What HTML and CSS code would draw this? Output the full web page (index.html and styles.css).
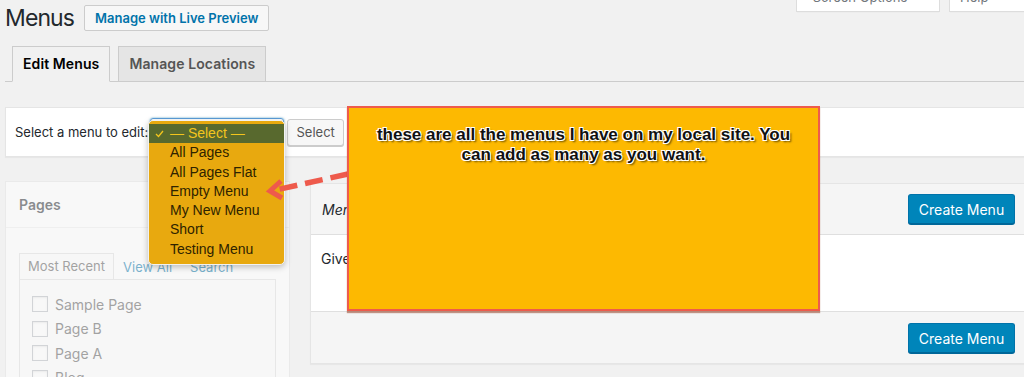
FILE: index.html
```html
<!DOCTYPE html>
<html lang="en">
<head>
    <meta charset="UTF-8">
    <title>Menus</title>
    <link rel="stylesheet" href="styles.css">
</head>
<body>
    <div class="wrap">
        <div class="page-head">
            <h1>Menus</h1>
            <a class="title-action" href="#">Manage with Live Preview</a>
            <div class="screen-links">
                <button class="meta-btn options">Screen Options <span class="caret"></span></button>
                <button class="meta-btn help">Help <span class="caret"></span></button>
            </div>
        </div>

        <div class="nav-tabs">
            <a class="nav-tab active" href="#">Edit Menus</a>
            <a class="nav-tab" href="#">Manage Locations</a>
        </div>

        <div class="manage-menus">
            <label>Select a menu to edit:</label>
            <div class="menu-select"></div>
            <button class="btn">Select</button>
        </div>

        <div class="columns">
            <div class="side disabled">
                <div class="box">
                    <h3 class="box-title">Pages</h3>
                    <div class="box-inside">
                        <div class="tabs">
                            <span class="tab active">Most Recent</span>
                            <a class="tab" href="#">View All</a>
                            <a class="tab" href="#">Search</a>
                        </div>
                        <ul class="checklist">
                            <li><span class="check"></span>Sample Page</li>
                            <li><span class="check"></span>Page B</li>
                            <li><span class="check"></span>Page A</li>
                            <li><span class="check"></span>Blog</li>
                        </ul>
                    </div>
                </div>
            </div>

            <div class="main">
                <div class="menu-edit">
                    <div class="menu-header">
                        <label class="name-label">Menu Name</label>
                        <input class="name-input" type="text" value="">
                        <button class="btn-primary">Create Menu</button>
                    </div>
                    <div class="menu-body">
                        Give your menu a name, then click Create Menu.
                    </div>
                    <div class="menu-footer">
                        <button class="btn-primary">Create Menu</button>
                    </div>
                </div>
            </div>
        </div>
    </div>

    <!-- the open select list and the annotation drawn over the screen -->
    <ul class="dropdown">
        <li class="selected">
            <svg class="tick" width="9" height="8" viewBox="0 0 9 8"><polyline points="1,4 3.5,6.5 8,1" fill="none" stroke="#f3c51d" stroke-width="1.3"/></svg>
            — Select —
        </li>
        <li>All Pages</li>
        <li>All Pages Flat</li>
        <li>Empty Menu</li>
        <li>My New Menu</li>
        <li>Short</li>
        <li>Testing Menu</li>
    </ul>

    <svg class="arrow" width="90" height="36" viewBox="0 0 90 36">
        <line x1="86" y1="8" x2="14" y2="24" stroke="#ee5a4c" stroke-width="5.5" stroke-dasharray="18 8"/>
        <polyline points="19,15 8,25 20,32" fill="none" stroke="#ee5a4c" stroke-width="5" stroke-linejoin="miter"/>
    </svg>

    <div class="callout">
        these are all the menus I have on my local site. You can add as many as you want.
    </div>
</body>
</html>
```

FILE: styles.css
```css
body {
    margin: 0;
    background: #f1f1f1;
    font-family: 'Inter', 'Noto Sans', sans-serif;
    font-size: 13px;
    color: #444;
    overflow: hidden;
    height: 377px;
}

.wrap {
    margin: 0 -2px 0 5px;
}

/* header */

.page-head {
    display: flex;
    align-items: flex-start;
}

h1 {
    margin: 4px 0 0;
    font-size: 23px;
    font-weight: 400;
    line-height: 29px;
    color: #23282d;
    letter-spacing: -0.9px;
}

.title-action {
    margin: 5px 0 0 10px;
    height: 24px;
    line-height: 24px;
    padding: 0 10px;
    border: 1px solid #ccc;
    border-radius: 2px;
    background: #f7f7f7;
    color: #0073aa;
    font-weight: 600;
    font-size: 13px;
    text-decoration: none;
}

.screen-links {
    display: flex;
    gap: 9px;
    margin: -17px -5px 0 auto;
}

.meta-btn {
    height: 29px;
    padding: 0 10px;
    background: #fff;
    border: 1px solid #ddd;
    border-top: none;
    box-shadow: 0 1px 1px -1px rgba(0, 0, 0, 0.1);
    font-family: inherit;
    font-size: 13px;
    color: #72777c;
    white-space: nowrap;
    display: flex;
    align-items: center;
    gap: 8px;
}

.meta-btn.options {
    width: 144px;
    justify-content: center;
}

.meta-btn.help {
    width: 82px;
}

.caret {
    width: 0;
    height: 0;
    border-left: 4px solid transparent;
    border-right: 4px solid transparent;
    border-top: 4px solid #a0a5aa;
}

/* tabs */

.nav-tabs {
    display: flex;
    gap: 8px;
    margin-top: 13px;
    padding-left: 7px;
    border-bottom: 1px solid #ccc;
}

.nav-tab {
    margin-bottom: -1px;
    padding: 5px 10px;
    line-height: 24px;
    border: 1px solid #ccc;
    background: #e5e5e5;
    color: #555;
    font-size: 14px;
    font-weight: 600;
    letter-spacing: 0.1px;
    text-decoration: none;
}

.nav-tab.active {
    background: #f1f1f1;
    border-bottom-color: #f1f1f1;
    color: #000;
}

/* select bar */

.manage-menus {
    margin-top: 25px;
    height: 48px;
    display: flex;
    align-items: center;
    padding-left: 9px;
    background: #fff;
    border: 1px solid #e5e5e5;
    box-shadow: 0 1px 1px rgba(0, 0, 0, 0.04);
    color: #23282d;
}

.menu-select {
    width: 132px;
    height: 26px;
    margin-left: 2px;
    border: 1px solid #5b9dd9;
    border-radius: 3px;
    box-shadow: 0 0 2px rgba(30, 140, 190, 0.8);
}

.btn {
    margin-left: 3px;
    height: 27px;
    width: 57px;
    padding: 0;
    border: 1px solid #ccc;
    border-radius: 3px;
    background: #f7f7f7;
    box-shadow: 0 1px 0 #ccc;
    font-family: inherit;
    font-size: 13px;
    color: #555;
}

/* columns */

.columns {
    display: flex;
    gap: 20px;
    margin-top: 24px;
}

.side {
    width: 285px;
    flex-shrink: 0;
}

.disabled {
    opacity: 0.5;
}

.box {
    background: #fff;
    border: 1px solid #e5e5e5;
    height: 220px;
}

.box-title {
    margin: 0;
    height: 45px;
    line-height: 45px;
    padding-left: 13px;
    font-size: 14px;
    font-weight: 600;
    color: #23282d;
    border-bottom: 1px solid #eee;
}

.box-inside {
    padding: 25px 13px 0;
}

.tabs {
    display: flex;
    align-items: flex-end;
}

.tab {
    padding: 0 9px;
    line-height: 24px;
    font-size: 13px;
    color: #0073aa;
    text-decoration: none;
}

.tab.active {
    border: 1px solid #dfdfdf;
    border-bottom: none;
    background: #fdfdfd;
    color: #555;
    padding: 0 8px;
    line-height: 25px;
}

.checklist {
    list-style: none;
    margin: 0;
    padding: 12px 12px 0;
    border: 1px solid #dfdfdf;
    background: #fdfdfd;
    height: 120px;
}

.checklist li {
    display: flex;
    align-items: center;
    gap: 7px;
    height: 24.5px;
    font-size: 14px;
    color: #555;
}

.check {
    width: 14px;
    height: 14px;
    border: 1px solid #b4b9be;
    background: #fff;
    box-shadow: inset 0 1px 2px rgba(0, 0, 0, 0.1);
}

.main {
    flex: 1;
    margin-top: 2px;
}

.menu-edit {
    background: #fff;
    border: 1px solid #e5e5e5;
    box-shadow: 0 1px 1px rgba(0, 0, 0, 0.04);
}

.menu-header,
.menu-footer {
    display: flex;
    align-items: center;
    padding: 10px;
    background: #f5f5f5;
}

.menu-header {
    border-bottom: 1px solid #dfdfdf;
}

.menu-footer {
    border-top: 1px solid #dfdfdf;
    justify-content: flex-end;
    padding-top: 11px;
}

.name-label {
    margin-left: 1px;
    font-style: italic;
    font-size: 14px;
    color: #23282d;
}

.name-input {
    margin-left: 10px;
    width: 230px;
    height: 26px;
    border: 1px solid #ddd;
}

.btn-primary {
    margin-left: auto;
    height: 30px;
    width: 107px;
    padding: 0;
    border: 1px solid #0073aa;
    border-bottom-color: #006799;
    border-radius: 3px;
    background: #0085ba;
    box-shadow: 0 1px 0 #006799;
    color: #fff;
    font-family: inherit;
    font-size: 14px;
}

.menu-body {
    height: 46px;
    padding: 15px 10px;
    font-size: 14px;
    color: #23282d;
}

/* overlays */

.dropdown {
    position: absolute;
    left: 148px;
    top: 120px;
    width: 135px;
    margin: 0;
    padding: 3px 0 5px;
    list-style: none;
    background: #e8a90f;
    border: 1px solid #f2f2f2;
    border-radius: 5px;
    box-shadow: 0 2px 6px rgba(0, 0, 0, 0.25);
    font-family: 'Liberation Sans', Arial, sans-serif;
    font-size: 14px;
}

.dropdown li {
    height: 19.3px;
    line-height: 19px;
    padding-left: 21px;
    color: #2e2300;
    position: relative;
}

.dropdown li.selected {
    background: #58692e;
    color: #f3c51d;
}

.tick {
    position: absolute;
    left: 6px;
    top: 6px;
}

.arrow {
    position: absolute;
    left: 262px;
    top: 166px;
}

.callout {
    position: absolute;
    left: 347px;
    top: 106px;
    width: 429px;
    height: 184px;
    padding: 17px 20px 0;
    background: #fdb901;
    border: 2px solid #ee5b4c;
    box-shadow: 0 2px 1px rgba(140, 50, 20, 0.5);
    text-align: center;
    font-family: 'Liberation Sans', Arial, sans-serif;
    font-weight: 700;
    font-size: 17px;
    line-height: 20px;
    color: #111;
    text-shadow: -1px -1px 0 #fff, 1px -1px 0 #fff, -1px 1px 0 #fff, 1px 1px 0 #fff, 2px 2px 2px rgba(0, 0, 0, 0.6);
}
```
